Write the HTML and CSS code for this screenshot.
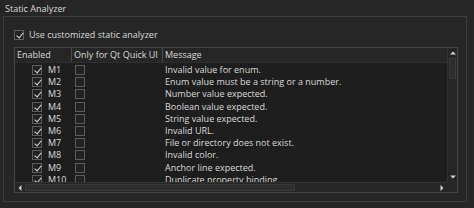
FILE: index.html
```html
<!DOCTYPE html>
<html>
<head>
<meta charset="utf-8">
<link rel="stylesheet" href="styles.css">
</head>
<body>
<div class="page">
  <div class="title">Static Analyzer</div>
  <div class="group">
    <label class="use-row"><span class="cb checked"></span><span>Use customized static analyzer</span></label>
    <div class="table">
      <div class="viewport">
        <div class="header">
          <div class="hcell c1">Enabled</div>
          <div class="hcell c2">Only for Qt Quick UI</div>
          <div class="hcell c3">Message</div>
        </div>
        <div class="rows">
          <div class="row"><div class="c1 en"><span class="cb checked"></span>M1</div><div class="c2"><span class="cb"></span></div><div class="c3">Invalid value for enum.</div></div>
          <div class="row"><div class="c1 en"><span class="cb checked"></span>M2</div><div class="c2"><span class="cb"></span></div><div class="c3">Enum value must be a string or a number.</div></div>
          <div class="row"><div class="c1 en"><span class="cb checked"></span>M3</div><div class="c2"><span class="cb"></span></div><div class="c3">Number value expected.</div></div>
          <div class="row"><div class="c1 en"><span class="cb checked"></span>M4</div><div class="c2"><span class="cb"></span></div><div class="c3">Boolean value expected.</div></div>
          <div class="row"><div class="c1 en"><span class="cb checked"></span>M5</div><div class="c2"><span class="cb"></span></div><div class="c3">String value expected.</div></div>
          <div class="row"><div class="c1 en"><span class="cb checked"></span>M6</div><div class="c2"><span class="cb"></span></div><div class="c3">Invalid URL.</div></div>
          <div class="row"><div class="c1 en"><span class="cb checked"></span>M7</div><div class="c2"><span class="cb"></span></div><div class="c3">File or directory does not exist.</div></div>
          <div class="row"><div class="c1 en"><span class="cb checked"></span>M8</div><div class="c2"><span class="cb"></span></div><div class="c3">Invalid color.</div></div>
          <div class="row"><div class="c1 en"><span class="cb checked"></span>M9</div><div class="c2"><span class="cb"></span></div><div class="c3">Anchor line expected.</div></div>
          <div class="row"><div class="c1 en"><span class="cb checked"></span>M10</div><div class="c2"><span class="cb"></span></div><div class="c3">Duplicate property binding.</div></div>
        </div>
      </div>
      <div class="vscroll">
        <div class="arrow up"></div>
        <div class="vthumb"></div>
        <div class="vtrack"></div>
        <div class="arrow down"></div>
      </div>
      <div class="hscroll">
        <div class="arrow left"></div>
        <div class="hthumb"></div>
        <div class="htrack"></div>
        <div class="arrow right"></div>
      </div>
      <div class="corner"></div>
    </div>
  </div>
</div>
</body>
</html>
```
FILE: styles.css
```css
html, body {
  margin: 0;
  padding: 0;
  background: #262626;
}
body {
  font-family: "Open Sans", "Noto Sans", sans-serif;
  font-size: 9px;
  color: #dadada;
  width: 474px;
  height: 208px;
  overflow: hidden;
}
.page {
  padding: 2px 7px 0 3px;
  box-sizing: border-box;
  height: 208px;
}
.title {
  padding-left: 2px;
  height: 14px;
  line-height: 13px;
}
.group {
  border: 1px solid #3d3d3d;
  height: 186px;
  box-sizing: border-box;
  padding: 11px 8px 0 10px;
}
.use-row {
  display: flex;
  align-items: center;
  gap: 5px;
  height: 13px;
}
.cb {
  width: 10px;
  height: 10px;
  border: 1px solid #5c5c5c;
  background: #222;
  box-sizing: border-box;
  position: relative;
  display: inline-block;
  flex: none;
}
.cb.checked::after {
  content: "";
  position: absolute;
  left: 2.5px;
  top: 0px;
  width: 3px;
  height: 6px;
  border: solid #d8d8d8;
  border-width: 0 1px 1px 0;
  transform: rotate(40deg);
}
.table {
  margin-top: 6px;
  border: 1px solid #454545;
  height: 146px;
  box-sizing: border-box;
  display: grid;
  grid-template-columns: 1fr 10px;
  grid-template-rows: 1fr 10px;
  background: #1e1e1e;
}
.viewport {
  overflow: hidden;
}
.header {
  display: flex;
  height: 14px;
  background: #262626;
  border-bottom: 1px solid #2e2e2e;
}
.hcell {
  line-height: 14px;
  padding-left: 2px;
  box-sizing: border-box;
  white-space: nowrap;
}
.hcell.c2, .hcell.c3 {
  border-left: 1px solid #4a4a4a;
}
.c1 { width: 56px; flex: none; }
.c2 { width: 91px; flex: none; }
.c3 { flex: 1; white-space: nowrap; }
.rows {
  padding-top: 1px;
}
.row {
  display: flex;
  height: 12.2px;
  line-height: 12.2px;
  align-items: center;
}
.row .c1 {
  display: flex;
  align-items: center;
  padding-left: 17px;
  gap: 6px;
  box-sizing: border-box;
}
.row .c2 {
  display: flex;
  align-items: center;
  padding-left: 4px;
  box-sizing: border-box;
}
.row .c3 {
  padding-left: 3px;
}
.vscroll {
  display: flex;
  flex-direction: column;
  background: #262626;
  border-left: 1px solid #333;
}
.hscroll {
  display: flex;
  background: #262626;
  border-top: 1px solid #333;
}
.corner {
  background: #262626;
}
.arrow {
  flex: none;
  position: relative;
}
.vscroll .arrow { width: 100%; height: 10px; }
.hscroll .arrow { height: 100%; width: 10px; }
.arrow::after {
  content: "";
  position: absolute;
  left: 50%;
  top: 50%;
  width: 0;
  height: 0;
  border: 3px solid transparent;
}
.arrow.up::after { border-bottom-color: #d0d0d0; transform: translate(-50%, -75%); }
.arrow.down::after { border-top-color: #d0d0d0; transform: translate(-50%, -25%); }
.arrow.left::after { border-right-color: #d0d0d0; transform: translate(-75%, -50%); }
.arrow.right::after { border-left-color: #d0d0d0; transform: translate(-25%, -50%); }
.vthumb {
  height: 19px;
  margin: 0 1px;
  background: #2e2e2e;
  border: 1px solid #3a3a3a;
}
.vtrack, .htrack { flex: 1; }
.hthumb {
  width: 268px;
  margin: 1px 0;
  background: #2e2e2e;
  border: 1px solid #3a3a3a;
}
```
